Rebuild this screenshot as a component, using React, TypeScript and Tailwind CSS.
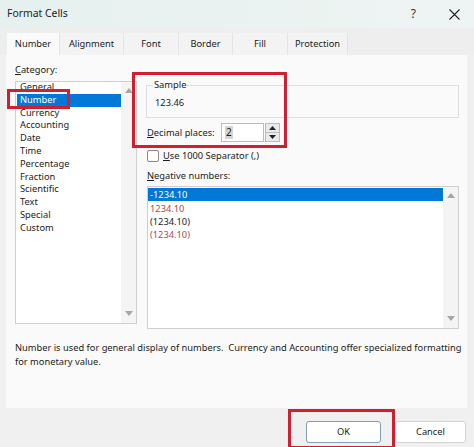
// App.tsx
// Cuadro de diálogo "Format Cells" (pestaña Number)

const font = { fontFamily: '"Noto Sans", "Open Sans", sans-serif' }

const categories = [
  'General',
  'Number',
  'Currency',
  'Accounting',
  'Date',
  'Time',
  'Percentage',
  'Fraction',
  'Scientific',
  'Text',
  'Special',
  'Custom',
]

const negatives = [
  { label: '-1234.10', red: false },
  { label: '1234.10', red: true },
  { label: '(1234.10)', red: false },
  { label: '(1234.10)', red: true },
]

const tabs = [
  { name: 'Number', w: 'w-[53px]' },
  { name: 'Alignment', w: 'w-[64px]' },
  { name: 'Font', w: 'w-[55px]' },
  { name: 'Border', w: 'w-[54px]' },
  { name: 'Fill', w: 'w-[55px]' },
  { name: 'Protection', w: 'w-[60px]' },
]

function UpArrow() {
  return (
    <svg width="8" height="5" viewBox="0 0 8 5">
      <path d="M0 5 L4 0 L8 5 Z" fill="#a6a6a6" />
    </svg>
  )
}

function DownArrow() {
  return (
    <svg width="8" height="5" viewBox="0 0 8 5">
      <path d="M0 0 L4 5 L8 0 Z" fill="#a6a6a6" />
    </svg>
  )
}

function Scrollbar() {
  return (
    <div className="w-[15px] h-full bg-[#f4f4f4] flex flex-col items-center justify-between pt-[6px] pb-[7px]">
      <UpArrow />
      <DownArrow />
    </div>
  )
}

export default function App() {
  return (
    <div
      className="relative w-[474px] h-[447px] bg-[#f0f0f0] overflow-hidden text-[#1b1b1b] text-[9.3px]"
      style={font}
    >
      {/* Barra de título */}
      <div className="h-[28px] flex items-center pl-[7px] pr-[14px] bg-gradient-to-r from-[#e6f1ef] to-[#eef4f3]">
        <span className="text-[10.4px] flex-1">Format Cells</span>
        <span className="text-[12px] text-[#333] mr-[33px]">?</span>
        <svg width="11" height="11" viewBox="0 0 11 11">
          <path d="M0.5 0.5 L10.5 10.5 M10.5 0.5 L0.5 10.5" stroke="#222" strokeWidth="1.1" />
        </svg>
      </div>

      {/* Pestañas */}
      <div className="flex pl-[7px] pt-[5px] bg-[#eeeeee]">
        {tabs.map((t, i) => (
          <div
            key={t.name}
            className={`${t.w} h-[22px] flex items-center justify-center border-r border-[#e4e4e4] ${
              i === 0 ? 'bg-[#fafafa]' : 'bg-[#f3f3f3]'
            }`}
          >
            {t.name}
          </div>
        ))}
      </div>

      {/* Panel */}
      <div className="mx-[6px] w-[461px] h-[353px] bg-[#fafafa] pt-[8px] pl-[9px]">
        <div className="flex">
          {/* Categorías */}
          <div className="w-[122px]">
            <div className="h-[14px] leading-[14px]">
              <span className="underline">C</span>ategory:
            </div>
            <div className="mt-[4px] h-[243px] bg-white border border-[#cfcfcf] flex overflow-hidden">
              <div className="flex-1 pl-[1px] -mt-[1px]">
                {categories.map((c) => (
                  <div
                    key={c}
                    className={`h-[12.8px] leading-[12.8px] pl-[3px] ${
                      c === 'Number' ? 'bg-[#0078d7] text-white' : ''
                    }`}
                  >
                    {c}
                  </div>
                ))}
              </div>
              <Scrollbar />
            </div>
          </div>

          {/* Lado derecho */}
          <div className="ml-[9px] w-[313px]">
            <div className="mt-[22px] h-[33px] border border-[#dedede] pl-[6px]">
              <div className="-mt-[8px] h-[14px] leading-[14px] w-fit bg-[#fafafa] px-[1px]">Sample</div>
              <div className="mt-[4px] pl-[2px] h-[14px] leading-[14px]">123.46</div>
            </div>

            <div className="mt-[5px] flex items-center h-[19px]">
              <div className="w-[75px] pl-[1px]">
                <span className="underline">D</span>ecimal places:
              </div>
              <div className="w-[43px] h-[19px] bg-white border border-[#bcbcbc] flex items-center pl-[3px]">
                <span className="bg-[#d4d4d4] px-[1px] leading-[13px] text-[10px]">2</span>
              </div>
              <div className="ml-[1px] w-[15px] h-[19px] flex flex-col border border-[#bcbcbc] bg-[#eaeaea]">
                <div className="flex-1 flex items-center justify-center border-b border-[#bcbcbc]">
                  <svg width="7" height="4" viewBox="0 0 7 4">
                    <path d="M0 4 L3.5 0 L7 4 Z" fill="#222" />
                  </svg>
                </div>
                <div className="flex-1 flex items-center justify-center">
                  <svg width="7" height="4" viewBox="0 0 7 4">
                    <path d="M0 0 L3.5 4 L7 0 Z" fill="#222" />
                  </svg>
                </div>
              </div>
            </div>

            <div className="mt-[8px] flex items-center h-[12px] pl-[1px]">
              <div className="w-[12px] h-[12px] border border-[#8a8a8a] rounded-[2px] bg-white"></div>
              <div className="ml-[4px]">
                <span className="underline">U</span>se 1000 Separator (,)
              </div>
            </div>

            <div className="mt-[7px] h-[14px] leading-[14px] pl-[1px]">
              <span className="underline">N</span>egative numbers:
            </div>

            <div className="mt-[3px] ml-[1px] w-[312px] h-[143px] bg-white border border-[#cfcfcf] flex">
              <div className="flex-1 pt-[1px]">
                {negatives.map((n, i) => (
                  <div
                    key={i}
                    className={`h-[13px] leading-[13px] pl-[2px] ${
                      i === 0 ? 'bg-[#0078d7] text-white h-[11px] leading-[11px] mb-[1px]' : ''
                    } ${n.red ? 'text-[#b4474b]' : ''}`}
                  >
                    {n.label}
                  </div>
                ))}
              </div>
              <Scrollbar />
            </div>
          </div>
        </div>

        {/* Descripción */}
        <div className="mt-[12px] w-[452px] leading-[14px]">
          Number is used for general display of numbers.&nbsp; Currency and Accounting offer specialized formatting for monetary value.
        </div>
      </div>

      {/* Botones */}
      <div className="flex justify-end pr-[8px] pt-[13px] gap-[14px]">
        <button className="w-[75px] h-[22px] bg-white border border-[#7f9db3] rounded-[3px]">OK</button>
        <button className="w-[71px] h-[22px] bg-white border border-[#d4d4d4] rounded-[3px]">Cancel</button>
      </div>

      {/* Marcos rojos de resaltado */}
      <div className="absolute left-[7px] top-[89px] w-[63px] h-[20px] border-[3px] border-[#d21f2f]"></div>
      <div className="absolute left-[132px] top-[72px] w-[155px] h-[76px] border-[3px] border-[#d21f2f]"></div>
      <div className="absolute left-[288px] top-[409px] w-[107px] h-[40px] border-[3px] border-[#d21f2f]"></div>
    </div>
  )
}
